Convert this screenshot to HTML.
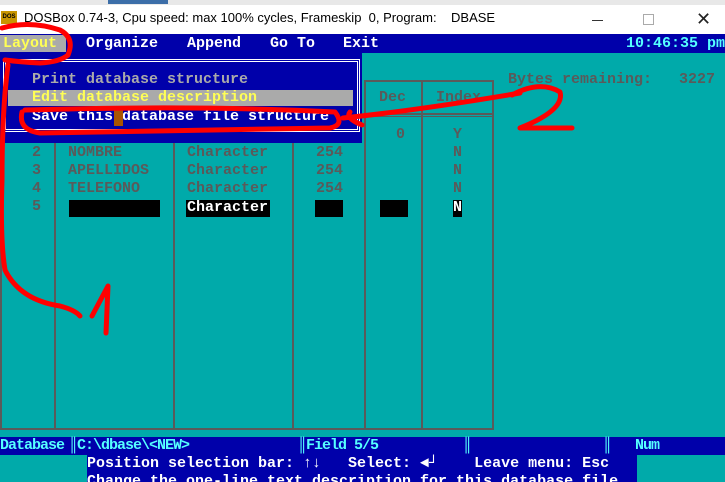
<!DOCTYPE html>
<html><head><style>
*{margin:0;padding:0;box-sizing:border-box}
html,body{width:725px;height:482px;overflow:hidden}
body{background:#00AAAA;position:relative;font-family:"Liberation Mono",monospace;font-size:15px;font-weight:bold}
.a{position:absolute;white-space:pre;line-height:18px}
.g{color:#5a5a5a}
.v{position:absolute;background:#5a5a5a;width:2px}
.s{position:absolute;white-space:pre;line-height:18px;color:#55ffff;font-family:"Liberation Mono",monospace;font-size:15px;font-weight:bold;letter-spacing:-1px}
</style></head><body>
<div style="position:absolute;left:0;top:0;width:725px;height:5px;background:#e8e8e8"></div>
<div style="position:absolute;left:108px;top:0;width:60px;height:4px;background:#3c6ea8"></div>
<div style="position:absolute;left:0;top:5px;width:725px;height:29px;background:#fff"></div>
<div style="position:absolute;left:1px;top:11px;width:16px;height:13px;background:#c89600;font:bold 6px 'Liberation Sans';color:#000;text-align:center;line-height:13px">DOS</div>
<div class="a" style="left:24px;top:10px;font:13px 'Liberation Sans',sans-serif;color:#000">DOSBox 0.74-3, Cpu speed: max 100% cycles, Frameskip  0, Program:    DBASE</div>
<div style="position:absolute;left:592px;top:20px;width:11px;height:1px;background:#333"></div>
<div style="position:absolute;left:643px;top:14px;width:11px;height:11px;border:1px solid #aaa"></div>
<div class="a" style="left:696px;top:9px;font:18px 'Liberation Sans';color:#222">✕</div>
<div style="position:absolute;left:0;top:34px;width:725px;height:19px;background:#0000AA"></div>
<div style="position:absolute;left:0;top:35px;width:66px;height:17px;background:#aaa"></div>
<div class="a" style="left:3px;top:35px;color:#ffff55">Layout</div>
<div class="a" style="left:86px;top:35px;color:#fff">Organize</div>
<div class="a" style="left:187px;top:35px;color:#fff">Append</div>
<div class="a" style="left:270px;top:35px;color:#fff">Go To</div>
<div class="a" style="left:343px;top:35px;color:#fff">Exit</div>
<div class="a" style="left:626px;top:35px;color:#55ffff">10:46:35 pm</div>
<div class="a g" style="left:508px;top:71px">Bytes remaining:   3227</div>
<div style="position:absolute;left:364px;top:80px;width:130px;height:350px;border:2px solid #5a5a5a"></div>
<div style="position:absolute;left:364px;top:113px;width:130px;height:4px;border-top:2px solid #5a5a5a;border-bottom:1px solid #5a5a5a"></div>
<div class="v" style="left:0;top:133px;height:297px"></div>
<div class="v" style="left:54px;top:133px;height:297px"></div>
<div class="v" style="left:173px;top:133px;height:297px"></div>
<div class="v" style="left:292px;top:133px;height:297px"></div>
<div class="v" style="left:421px;top:80px;height:350px"></div>
<div style="position:absolute;left:0;top:428px;width:494px;height:2px;background:#5a5a5a"></div>
<div class="a g" style="left:379px;top:89px">Dec</div>
<div class="a g" style="left:436px;top:89px">Index</div>
<div class="a g" style="left:396px;top:126px">0</div>
<div class="a g" style="left:453px;top:126px">Y
N
N
N</div>
<div class="a g" style="left:32px;top:144px">2
3
4
5</div>
<div class="a g" style="left:68px;top:144px">NOMBRE
APELLIDOS
TELEFONO</div>
<div class="a g" style="left:187px;top:144px">Character
Character
Character</div>
<div class="a g" style="left:316px;top:144px">254
254
254</div>
<div style="position:absolute;left:69px;top:200px;width:91px;height:17px;background:#000"></div>
<div style="position:absolute;left:186px;top:200px;width:84px;height:17px;background:#000"></div>
<div class="a" style="left:187px;top:199px;color:#fff">Character</div>
<div style="position:absolute;left:315px;top:200px;width:28px;height:17px;background:#000"></div>
<div style="position:absolute;left:380px;top:200px;width:28px;height:17px;background:#000"></div>
<div style="position:absolute;left:453px;top:200px;width:9px;height:17px;background:#000"></div>
<div class="a" style="left:453px;top:199px;color:#fff">N</div>
<div style="position:absolute;left:0;top:53px;width:362px;height:90px;background:#0000AA"></div>
<div style="position:absolute;left:3px;top:59px;width:357px;height:73px;border:1px solid #fff"></div>
<div style="position:absolute;left:5px;top:61px;width:353px;height:69px;border:1px solid #fff"></div>
<div style="position:absolute;left:8px;top:90px;width:345px;height:16px;background:#aaa"></div>
<div class="a" style="left:32px;top:71px;color:#aaa">Print database structure</div>
<div class="a" style="left:32px;top:89px;color:#ffff55">Edit database description</div>
<div class="a" style="left:32px;top:108px;color:#fff">Save this database file structure</div>
<div style="position:absolute;left:114px;top:110px;width:9px;height:16px;background:#aa5500"></div>
<div style="position:absolute;left:0;top:437px;width:725px;height:18px;background:#0000AA"></div>
<div class="s" style="left:0;top:437px">Database</div>
<div class="s" style="left:69px;top:437px">║C:\dbase\&lt;NEW&gt;</div>
<div class="s" style="left:298px;top:437px">║Field 5/5</div>
<div class="s" style="left:463px;top:437px">║</div>
<div class="s" style="left:603px;top:437px">║   Num</div>
<div style="position:absolute;left:87px;top:455px;width:550px;height:27px;background:#0000AA"></div>
<div class="a" style="left:87px;top:455px;color:#fff">Position selection bar: ↑↓   Select: ◄┘    Leave menu: Esc</div>
<div class="a" style="left:87px;top:473px;color:#fff">Change the one-line text description for this database file</div>
<svg style="position:absolute;left:0;top:0" width="725" height="482" fill="none" stroke="#ff0000" stroke-width="5" stroke-linecap="round" stroke-linejoin="round">
<path d="M2 28 Q30 20 60 30 Q75 38 68 55 Q60 62 40 63 Q20 62 5 60"/>
<path d="M8 65 Q2 110 2 180 Q0 240 5 270 Q20 300 60 306 Q75 310 80 316"/>
<path d="M92 316 L108 286 L106 333"/>
<path d="M22 112 Q18 130 40 133 L330 128 Q345 125 335 112 Q200 105 25 110"/>
<path d="M362 125 Q345 118 350 112 M343 118 Q420 110 520 93"/>
<path d="M512 95 Q540 80 560 92 Q565 110 520 128 L572 128"/>
</svg>
</body></html>
